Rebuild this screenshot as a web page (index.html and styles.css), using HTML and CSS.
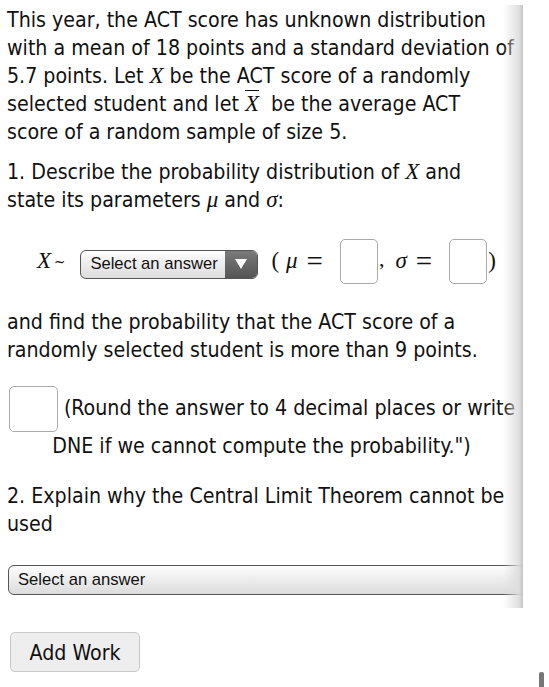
FILE: index.html
```html
<!DOCTYPE html>
<html>
<head>
<meta charset="utf-8">
<link rel="stylesheet" href="styles.css">
</head>
<body>
<div class="panel">
  <p class="para p1">This year, the ACT score has unknown distribution<br>with a mean of 18 points and a standard deviation of<br>5.7 points. Let <span class="m">X</span> be the ACT score of a randomly<br>selected student and let <span class="m ov">X</span>&nbsp; be the average ACT<br>score of a random sample of size 5.</p>
  <p class="para p2">1. Describe the probability distribution of <span class="m">X</span> and<br>state its parameters <span class="m">μ</span> and <span class="m">σ</span>:</p>
  <div class="dist-row">
    <span class="m xvar">X</span><span class="tilde">~</span>
    <span class="select small"><span class="sel-label">Select an answer</span><span class="sel-arrow"><svg width="12" height="10" viewBox="0 0 12 10"><polygon points="0,0 12,0 6,10" fill="#fff"/></svg></span></span>
    <span class="paren open">(</span><span class="m mu">μ</span><span class="eq">=</span>
    <span class="box"></span><span class="comma">,</span><span class="m sig">σ</span><span class="eq">=</span>
    <span class="box"></span><span class="paren close">)</span>
  </div>
  <p class="para p3">and find the probability that the ACT score of a randomly selected student is more than 9 points.</p>
  <p class="para p4"><span class="box ans"></span> (Round the answer to 4 decimal places or write DNE if we cannot compute the probability.")</p>
  <p class="para p5">2. Explain why the Central Limit Theorem cannot be used</p>
  <div class="select wide"><span class="sel-label">Select an answer</span></div>
</div>
<button class="add-work">Add Work</button>
<span class="scroll-nub"></span>
</body>
</html>
```
FILE: styles.css
```css
html, body {
  margin: 0;
  padding: 0;
  background: #fff;
}
body {
  width: 549px;
  height: 687px;
  position: relative;
  overflow: hidden;
  font-family: "DejaVu Sans Condensed", "DejaVu Sans", sans-serif;
  font-size: 21.2px;
  color: #111;
}
.panel {
  position: relative;
  width: 516px;
  margin-top: 5px;
  padding: 1px 0 0 7px;
  height: 602px;
  overflow: hidden;
}
.panel::after {
  content: "";
  position: absolute;
  top: 0;
  right: 0;
  width: 20px;
  bottom: 0;
  background: linear-gradient(to right, rgba(255,255,255,0), rgba(220,220,220,0.9) 80%, #c4c4c4 100%);
}
.para {
  margin: 0;
  line-height: 28px;
}
.p2 { margin-top: 12px; }
.p3 { margin-top: 24px; }
.p4 { margin: 22px 0 0 -7px; text-align: center; }
.p5 { margin-top: 22px; }
.m {
  font-family: "Liberation Serif", "Times New Roman", serif;
  font-style: italic;
  font-size: 23px;
  line-height: 20px;
}
.ov {
  text-decoration: overline;
  text-decoration-thickness: 1px;
}
.dist-row {
  margin-top: 24px;
  height: 46px;
  display: flex;
  align-items: center;
  padding-left: 30px;
}
.xvar { font-size: 23px; }
.tilde { font-size: 15px; margin: 0 15px 0 3px; position: relative; top: 1px; }
.select {
  display: flex;
  align-items: stretch;
  box-sizing: border-box;
  border: 1px solid #555;
  border-radius: 6px;
  background: linear-gradient(#fdfdfd, #dcdcdc);
  font-family: "Liberation Sans", Arial, sans-serif;
  font-size: 16.6px;
  color: #111;
  overflow: hidden;
}
.select.small {
  width: 178px;
  height: 29px;
  margin-top: 6px;
}
.sel-label {
  flex: 1;
  display: flex;
  align-items: center;
  padding-left: 9px;
  white-space: nowrap;
  min-width: 0;
}
.sel-arrow {
  flex: none;
  width: 32px;
  display: flex;
  align-items: center;
  justify-content: center;
  background: linear-gradient(#7a7a7a, #555);
}
.paren {
  font-family: "Liberation Serif", serif;
  font-size: 23px;
}
.paren.open { margin-left: 13px; }
.mu { margin-left: 7px; }
.eq {
  font-family: "Liberation Serif", serif;
  font-size: 29px;
  margin: 0 17px 0 9px;
}
.comma {
  font-family: "Liberation Serif", serif;
  font-size: 22px;
  align-self: flex-end;
  margin: 0 0 12px 1px;
}
.sig { margin-left: 11px; }
.paren.close { margin-left: 1px; }
.box {
  display: inline-block;
  box-sizing: border-box;
  width: 38px;
  height: 45px;
  border: 1px solid #aaa;
  border-radius: 5px;
  background: #fff;
}
.box.ans {
  width: 49px;
  height: 46px;
  vertical-align: middle;
  margin-left: 1px;
}
.select.wide {
  margin-top: 27px;
  width: 530px;
  height: 30px;
  margin-left: 1px;
}
.add-work {
  display: block;
  margin: 24px 0 0 10px;
  width: 130px;
  height: 40px;
  background: #eeeeee;
  border: 1px solid #c8c8c8;
  border-radius: 5px;
  font-family: "DejaVu Sans Condensed", "DejaVu Sans", sans-serif;
  font-size: 21.2px;
  color: #111;
  padding: 0;
}
.scroll-nub {
  position: absolute;
  left: 539px;
  top: 672px;
  width: 5px;
  height: 15px;
  background: #777;
  border-radius: 2px 2px 0 0;
}
```
